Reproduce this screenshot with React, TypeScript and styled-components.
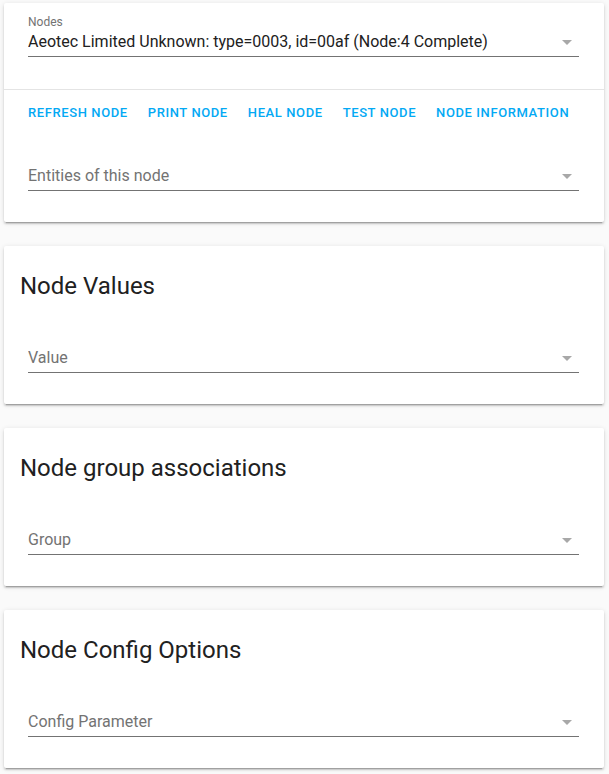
import React from "react";
import styled, { createGlobalStyle } from "styled-components";

const Global = createGlobalStyle`
  html, body { margin: 0; padding: 0; background: #fafafa; }
  body { font-family: Roboto, "Noto Sans", sans-serif; -webkit-font-smoothing: antialiased; }
  * { box-sizing: border-box; }
`;

const Page = styled.div`
  display: flex;
  flex-direction: column;
  gap: 24px;
  padding: 3px 5px 6px 4px;
  width: 609px;
`;

const Card = styled.div`
  background: #fff;
  border-radius: 2px;
  box-shadow: 0 2px 2px 0 rgba(0, 0, 0, 0.14), 0 1px 5px 0 rgba(0, 0, 0, 0.12),
    0 3px 1px -2px rgba(0, 0, 0, 0.2);
`;

const CardHeader = styled.div`
  padding: 24px 16px 0;
  font-size: 24px;
  line-height: 32px;
  color: #212121;
  font-weight: 400;
`;

const Section = styled.div<{ $pt: number; $pb: number }>`
  padding: ${(p) => p.$pt}px 25px ${(p) => p.$pb}px 24px;
`;

const Label = styled.div`
  font-size: 12px;
  line-height: 14px;
  color: #737373;
`;

const Field = styled.div`
  display: flex;
  align-items: flex-start;
  border-bottom: 1px solid #737373;
  padding-bottom: 2px;
`;

const FieldText = styled.div<{ $placeholder?: boolean }>`
  flex: 1;
  font-size: 16px;
  line-height: 24px;
  padding-top: 1px;
  color: ${(p) => (p.$placeholder ? "#737373" : "#212121")};
  white-space: nowrap;
  overflow: hidden;
`;

const Arrow = styled.svg`
  width: 24px;
  height: 24px;
  flex: none;
  margin-top: 1px;
  fill: #a8a8a8;
`;

const Divider = styled.div`
  border-top: 1px solid #e4e4e4;
`;

const ButtonRow = styled.div`
  display: flex;
  gap: 4px;
  padding: 5px 16px 0;
`;

const Button = styled.div`
  padding: 8px 8px;
  font-size: 13px;
  line-height: 20px;
  font-weight: 500;
  letter-spacing: 0.6px;
  color: #03a9f4;
  text-transform: uppercase;
  white-space: nowrap;
`;

const Dropdown: React.FC<{ label?: string; value?: string; placeholder?: string }> = ({
  label,
  value,
  placeholder,
}) => (
  <div>
    {label && <Label>{label}</Label>}
    <Field>
      <FieldText $placeholder={!value}>{value ?? placeholder}</FieldText>
      <Arrow viewBox="0 0 24 24">
        <path d="M7 10l5 5 5-5z" />
      </Arrow>
    </Field>
  </div>
);

export default function App() {
  return (
    <>
      <Global />
      <Page>
        <Card>
          <Section $pt={12} $pb={32}>
            <Dropdown
              label="Nodes"
              value="Aeotec Limited Unknown: type=0003, id=00af (Node:4 Complete)"
            />
          </Section>
          <Divider />
          <ButtonRow>
            <Button>Refresh Node</Button>
            <Button>Print Node</Button>
            <Button>Heal Node</Button>
            <Button>Test Node</Button>
            <Button>Node Information</Button>
          </ButtonRow>
          <Section $pt={32} $pb={31}>
            <Dropdown placeholder="Entities of this node" />
          </Section>
        </Card>
        <Card>
          <CardHeader>Node Values</CardHeader>
          <Section $pt={43} $pb={31}>
            <Dropdown placeholder="Value" />
          </Section>
        </Card>
        <Card>
          <CardHeader>Node group associations</CardHeader>
          <Section $pt={43} $pb={31}>
            <Dropdown placeholder="Group" />
          </Section>
        </Card>
        <Card>
          <CardHeader>Node Config Options</CardHeader>
          <Section $pt={43} $pb={31}>
            <Dropdown placeholder="Config Parameter" />
          </Section>
        </Card>
      </Page>
    </>
  );
}
